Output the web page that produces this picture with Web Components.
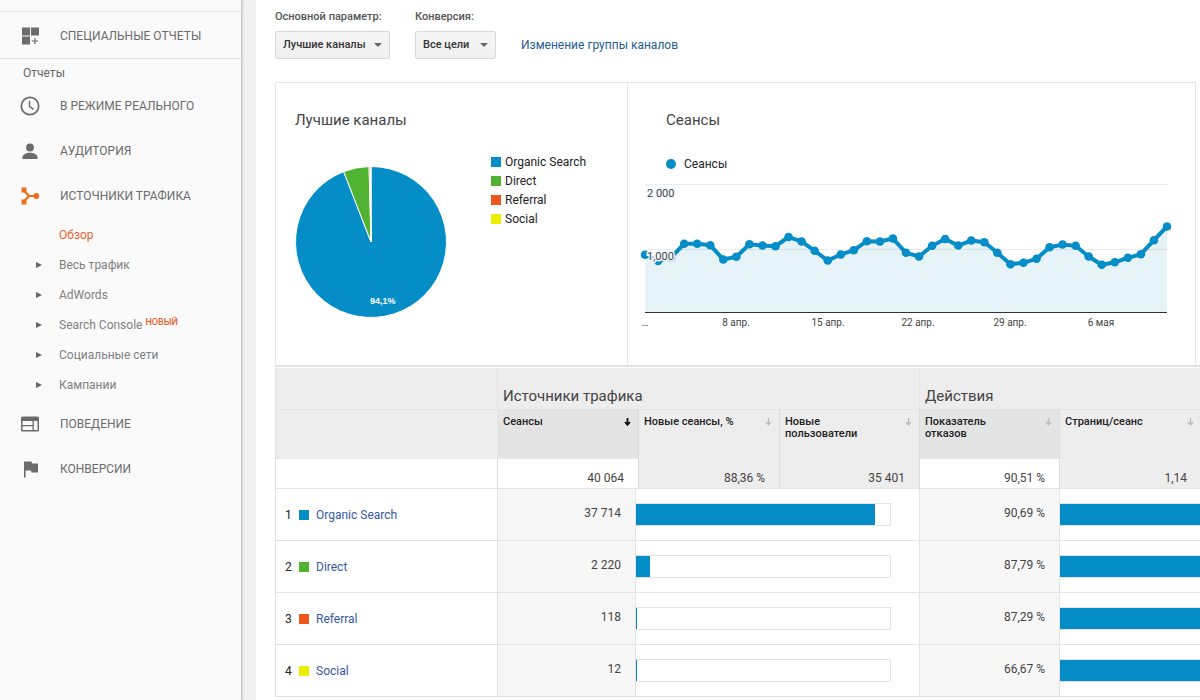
<!DOCTYPE html>
<html lang="ru">
<head>
<meta charset="utf-8">
<title>Источники трафика – Обзор</title>
<style>
  body { margin: 0; background: #fff; font-family: Roboto, "Liberation Sans", sans-serif; font-size: 12px; color: #444; }
</style>
</head>
<body>
<ga-app>
  <ga-sidebar slot="nav">
    <ga-nav-item slot="top" label="СПЕЦИАЛЬНЫЕ ОТЧЕТЫ">
      <svg slot="icon" width="20" height="20" viewBox="0 0 20 20" fill="#6b6b6b"><path d="M2 1.500h8v8H2zM11 1.500h8v8h-8zM2 10.500h8v8H2zM14.300 12h1.200v2.400h2.500v1.200h-2.500V18h-1.200v-2.400h-2.500v-1.200h2.500z"/></svg>
    </ga-nav-item>
    <ga-nav-item label="В РЕЖИМЕ РЕАЛЬНОГО">
      <svg slot="icon" width="20" height="20" viewBox="0 0 20 20" fill="none" stroke="#6b6b6b" stroke-width="1.700"><circle cx="10" cy="10" r="8.700"/><path d="M9.500 5v5.700l4.200 2.600" stroke-width="1.400"/></svg>
    </ga-nav-item>
    <ga-nav-item label="АУДИТОРИЯ">
      <svg slot="icon" width="20" height="20" viewBox="0 0 20 20" fill="#6b6b6b"><circle cx="10" cy="6.500" r="3.900"/><path d="M2.500 18v-2c0-2.700 4.800-4.200 7.500-4.200s7.500 1.500 7.500 4.200v2z"/></svg>
    </ga-nav-item>
    <ga-nav-item label="ИСТОЧНИКИ ТРАФИКА">
      <svg slot="icon" width="20" height="20" viewBox="0 0 20 20" fill="#ef6c1a"><path d="M3.500 4l5.500 6-5.500 6M9 10h7" fill="none" stroke="#ef6c1a" stroke-width="2.200"/><path d="M1.500 1.500h5v5h-5zM1.500 13.500h5v5h-5z"/><circle cx="16.300" cy="10" r="2.900"/></svg>
    </ga-nav-item>
    <ga-nav-group>
      <ga-nav-sub active>Обзор</ga-nav-sub>
      <ga-nav-sub>Весь трафик</ga-nav-sub>
      <ga-nav-sub>AdWords</ga-nav-sub>
      <ga-nav-sub badge="НОВЫЙ">Search Console</ga-nav-sub>
      <ga-nav-sub>Социальные сети</ga-nav-sub>
      <ga-nav-sub>Кампании</ga-nav-sub>
    </ga-nav-group>
    <ga-nav-item label="ПОВЕДЕНИЕ">
      <svg slot="icon" width="20" height="20" viewBox="0 0 20 20" fill="#6b6b6b"><path fill-rule="evenodd" d="M2.500 2.500h15a1.500 1.500 0 0 1 1.500 1.500v12a1.500 1.500 0 0 1-1.500 1.500h-15A1.500 1.500 0 0 1 1 16V4a1.500 1.500 0 0 1 1.500-1.500zM2.500 7v4h10V7zM2.500 12.200V16h10v-3.800zM13.800 7v9h3.700V7z"/></svg>
    </ga-nav-item>
    <ga-nav-item label="КОНВЕРСИИ">
      <svg slot="icon" width="20" height="20" viewBox="0 0 20 20" fill="#6b6b6b"><path d="M4 2.500h7.500l.5 2h6v9h-6.500l-.5-2H5.600V18.500H4z"/></svg>
    </ga-nav-item>
  </ga-sidebar>

  <ga-toolbar>
    <ga-dropdown label="Основной параметр:" value="Лучшие каналы" style="--select-width: 115px"></ga-dropdown>
    <ga-dropdown label="Конверсия:" value="Все цели" style="--select-width: 81px"></ga-dropdown>
    <ga-link>Изменение группы каналов</ga-link>
  </ga-toolbar>
  <ga-cards>
    <ga-card heading="Лучшие каналы" style="--pad: 19px"><ga-pie></ga-pie></ga-card>
    <ga-card heading="Сеансы" style="--pad: 38px"><ga-line-chart></ga-line-chart></ga-card>
  </ga-cards>
  <ga-table></ga-table>
</ga-app>

<script>
const CHANNELS = [
  { name: 'Organic Search', color: '#058dc7', sessions: '37 714', share: 94.1, bounce: '90,69 %' },
  { name: 'Direct', color: '#50b432', sessions: '2 220', share: 5.5, bounce: '87,79 %' },
  { name: 'Referral', color: '#ed561b', sessions: '118', share: 0.3, bounce: '87,29 %' },
  { name: 'Social', color: '#eded00', sessions: '12', share: 0.1, bounce: '66,67 %' }
];

function define(name, render) {
  customElements.define(name, class extends HTMLElement {
    constructor() {
      super();
      this.attachShadow({ mode: 'open' });
    }
    connectedCallback() {
      this.shadowRoot.innerHTML = render(this);
    }
  });
}

define('ga-app', () => `
  <style>
    :host { display: grid; grid-template-columns: 242px 14px minmax(0, 1fr); min-height: 100vh; }
    .gutter { background: #f1f1f1; }
    main { padding: 10px 0 0 19px; overflow: hidden; }
  </style>
  <slot name="nav"></slot><div class="gutter"></div><main><slot></slot></main>`);

define('ga-sidebar', () => `
  <style>
    :host { display: block; background: #fafafa; border-right: 1px solid #c8c8c8; box-sizing: border-box; box-shadow: 1px 0 2px rgba(0,0,0,.12); z-index: 1; }
    .top { margin-top: 11px; padding-top: 1px; border: solid #e2e2e2; border-width: 1px 0; }
    .caption { padding: 4px 0 0 23px; height: 20px; line-height: 20px; color: #666; }
  </style>
  <nav>
    <div class="top"><slot name="top"></slot></div>
    <div class="caption">Отчеты</div>
    <slot></slot>
  </nav>`);

define('ga-nav-item', el => `
  <style>
    :host { display: block; }
    a { display: flex; align-items: center; gap: 20px; height: 45px; padding-left: 20px; color: #6b6b6b; text-decoration: none; white-space: nowrap; }
    ::slotted(svg) { display: block; }
  </style>
  <a href="#"><slot name="icon"></slot><span>${el.getAttribute('label')}</span></a>`);

define('ga-nav-group', () => `
  <style>:host { display: block; padding: 2px 0 1px; }</style><slot></slot>`);

define('ga-nav-sub', el => `
  <style>
    :host { display: block; }
    a { display: grid; grid-template-columns: 23px auto auto; justify-content: start; align-items: center; height: 30px; padding-left: 36px; color: #808080; text-decoration: none; white-space: nowrap; }
    :host([active]) a { color: #ef6230; }
    svg { display: block; }
    b { font-size: 9px; font-weight: 500; line-height: 10px; color: #e2602b; margin: 0 0 6px 3px; }
  </style>
  <a href="#">
    ${el.hasAttribute('active') ? '<i></i>' : '<svg width="6" height="8" viewBox="0 0 6 8"><path d="M0 1l6 3-6 3z" fill="#666"/></svg>'}
    <span><slot></slot></span>${el.hasAttribute('badge') ? `<b>${el.getAttribute('badge')}</b>` : ''}
  </a>`);

define('ga-toolbar', () => `
  <style>:host { display: flex; align-items: flex-end; gap: 25px; margin-bottom: 23px; }</style><slot></slot>`);

define('ga-dropdown', el => `
  <style>
    :host { display: grid; grid-template-columns: var(--select-width); gap: 7px; }
    label { font-size: 11px; line-height: 14px; font-weight: 500; color: #555; white-space: nowrap; }
    .box { display: grid; align-items: center; }
    .box > * { grid-area: 1 / 1; }
    select { appearance: none; width: 100%; height: 28px; margin: 0; padding: 0 20px 2px 7px; border: 1px solid #d8d8d8; border-radius: 2px; background: linear-gradient(#f6f6f6, #f0f0f0); font: 500 11px Roboto, sans-serif; color: #333; }
    svg { justify-self: end; margin-right: 8px; pointer-events: none; }
  </style>
  <label for="s">${el.getAttribute('label')}</label>
  <div class="box">
    <select id="s"><option>${el.getAttribute('value')}</option></select>
    <svg width="8" height="4" viewBox="0 0 8 4"><path d="M0 0h8L4 4z" fill="#666"/></svg>
  </div>`);

define('ga-link', () => `
  <style>
    :host { display: block; }
    a { display: block; line-height: 28px; color: #265c8f; text-decoration: none; white-space: nowrap; }
  </style>
  <a href="#"><slot></slot></a>`);

define('ga-cards', () => `
  <style>
    :host { display: grid; grid-template-columns: 352fr 568fr; margin-right: 4px; border-left: 1px solid #e6e6e6; border-top: 1px solid #e6e6e6; }
  </style>
  <slot></slot>`);

define('ga-card', el => `
  <style>
    :host { display: block; min-width: 0; border-right: 1px solid #e6e6e6; min-height: 282px; }
    h2 { margin: 27px 0 22px var(--pad); font-size: 15px; line-height: 20px; font-weight: 400; color: #444; }
  </style>
  <h2>${el.getAttribute('heading')}</h2><slot></slot>`);

define('ga-pie', () => {
  const point = share => {
    const a = share / 100 * 2 * Math.PI;
    return `${76 + 75.500 * Math.sin(a)} ${76 - 75.500 * Math.cos(a)}`;
  };
  let from = 0;
  const slices = CHANNELS.map(c => {
    const start = from;
    from += c.share;
    return `<path d="M76 76L${point(start)}A75.500 75.500 0 ${c.share > 50 ? 1 : 0} 1 ${point(from)}z" fill="${c.color}" stroke="#fff"/>`;
  }).join('');
  return `
  <style>
    :host { display: flex; align-items: flex-start; gap: 44px; padding-left: 19px; }
    svg { flex: none; margin-top: 14px; }
    text { font: 700 9px "Liberation Sans", sans-serif; fill: #fff; }
    ul { list-style: none; margin: 0; padding: 0; color: #222; }
    li { display: flex; align-items: center; gap: 4px; height: 19px; white-space: nowrap; }
    i { width: 10px; height: 10px; }
  </style>
  <svg width="152" height="152" viewBox="0 0 152 152">${slices}<text x="75" y="138">94,1%</text></svg>
  <ul>${CHANNELS.map(c => `<li><i style="background:${c.color}"></i>${c.name}</li>`).join('')}</ul>`;
});

define('ga-line-chart', () => {
  const values = [894, 797, 852, 1066, 1066, 1044, 820, 863, 1059, 1039, 1028, 1172, 1102, 956, 805, 898, 966, 1106, 1102, 1148, 925,
    867, 1034, 1141, 1039, 1117, 1091, 925, 747, 769, 831, 1012, 1055, 1034, 867, 738, 778, 847, 903, 1122, 1336];
  const left = 17, right = 539, base = 138;
  const pts = values.map((v, i) => [left + (right - left) * i / (values.length - 1), base - v * 0.064]);
  const line = pts.map(p => p.join(',')).join(' ');
  const ticks = [[17, '…'], [108, '8 апр.'], [200, '15 апр.'], [290, '22 апр.'], [382, '29 апр.'], [473, '6 мая']];
  return `
  <style>
    :host { display: block; }
    .legend { display: flex; align-items: center; gap: 8px; height: 20px; padding: 2px 0 0 38px; color: #222; }
    .legend i { width: 10px; height: 10px; border-radius: 50%; background: #058dc7; }
    svg { display: block; width: 100%; overflow: visible; }
    text { font: 10px Roboto, sans-serif; fill: #444; }
    .tick { text-anchor: middle; }
    .scale { font-size: 11px; paint-order: stroke; stroke: #f3f9fc; stroke-width: 3px; }
  </style>
  <div class="legend"><i></i>Сеансы</div>
  <svg viewBox="0 0 567 160">
    <path d="M${left} 10.500H${right}" stroke="#ebebeb"/>
    <polygon points="${left},${base} ${line} ${right},${base}" fill="#e6f3f9"/>
    <path d="M${left} 75.500H${right}" stroke="#000" stroke-opacity=".08"/>
    <polyline points="${line}" fill="none" stroke="#058dc7" stroke-width="4"/>
    ${pts.map(p => `<circle cx="${p[0]}" cy="${p[1]}" r="4.300" fill="#058dc7"/>`).join('')}
    <path d="M${left} 138.500H${right}" stroke="#333"/>
    <text class="scale" x="19" y="23">2 000</text>
    <text class="scale" x="19" y="86">1,000</text>
    ${ticks.map(t => `<text class="tick" x="${t[0]}" y="152">${t[1]}</text>`).join('')}
  </svg>`;
});

define('ga-table', () => {
  const head = (title, cls, span, on) => `
    <th class="${cls}" colspan="${span}" scope="col"><div><span>${title}</span>
      <svg width="7" height="8" viewBox="0 0 7 8"><path d="M3.500 0v6M1 4l2.500 2.800L6 4" fill="none" stroke="${on ? '#111' : '#bbb'}" stroke-width="${on ? 1.8 : 1.3}"/></svg></div></th>`;
  return `
  <style>
    :host { display: block; border-top: 2px solid #e2e2e2; padding-top: 1px; }
    table { width: calc(100% + 2px); table-layout: fixed; border-collapse: separate; border-spacing: 0; border-left: 1px solid #e2e2e2; box-sizing: border-box; }
    th, td { padding: 0; box-sizing: border-box; text-align: left; font-weight: 400; border-bottom: 1px solid #e4e4e4; }
    thead th, thead td { background: #ededed; }
    .n { border-right: 1px solid #e0e0e0; }
    .group th, .group td { height: 42px; border-color: #e4e4e4; }
    .group th { font-size: 15px; padding: 14px 0 0 5px; }
    .group .n { border-right-color: #e4e4e4; }
    .cols th, .cols td { height: 49px; vertical-align: top; border-color: #e8e8e8; }
    .cols th { padding: 6px 7px 0 5px; font-size: 11px; line-height: 12px; font-weight: 500; color: #222; border-right: 1px solid #dcdcdc; }
    .cols th div { display: flex; justify-content: space-between; }
    .cols th span { max-width: 100px; }
    .cols th svg { flex: none; margin-top: 2px; }
    .cols .main { background: #e4e4e4; }
    .total td { height: 30px; padding: 8px 14px 0 0; text-align: right; border-right: 1px solid #dcdcdc; }
    .total .main, .total .n { background: #fff; }
    tbody td { height: 52px; }
    tbody .value { background: #f7f7f7; text-align: right; padding: 0 14px 3px 0; border-right: 1px solid #e4e4e4; }
    .name { display: flex; align-items: center; padding-left: 9px; }
    .name span { width: 14px; color: #222; }
    .name i { width: 10px; height: 10px; margin-right: 7px; }
    a { color: #3457a6; text-decoration: none; }
    .bar { box-sizing: border-box; height: 23px; width: 90%; border: solid #e4e4e4; border-width: 1px 1px 1px 0; }
    .bar i { display: block; height: 21px; min-width: 1px; background: #058dc7; }
    .bar.full { width: 100%; }
    .end { border-right: 1px solid #e4e4e4; }
  </style>
  <table>
    <colgroup><col style="width:222px"><col style="width:138px"><col style="width:3px"><col style="width:141px"><col style="width:140px"><col style="width:140px"><col style="width:142px"></colgroup>
    <thead>
      <tr class="group"><td class="n"></td><th colspan="4" class="end" scope="colgroup">Источники трафика</th><th colspan="2" scope="colgroup">Действия</th></tr>
      <tr class="cols"><td class="n"></td>
        ${head('Сеансы', 'main', 2, true)}${head('Новые сеансы, %', '', 1)}${head('Новые пользователи', '', 1)}${head('Показатель отказов', 'main', 1)}${head('Страниц/сеанс', '', 1)}</tr>
      <tr class="total"><td class="n"></td><td class="main" colspan="2">40 064</td><td>88,36 %</td><td>35 401</td><td class="main">90,51 %</td><td>1,14</td></tr>
    </thead>
    <tbody>
      ${CHANNELS.map((c, i) => `<tr>
        <td class="n"><div class="name"><span>${i + 1}</span><i style="background:${c.color}"></i><a href="#">${c.name}</a></div></td>
        <td class="value">${c.sessions}</td>
        <td colspan="3" class="end"><div class="bar"><i style="width:${c.share}%"></i></div></td>
        <td class="value">${c.bounce}</td>
        <td><div class="bar full"><i></i></div></td></tr>`).join('')}
    </tbody>
  </table>`;
});
</script>
</body>
</html>
